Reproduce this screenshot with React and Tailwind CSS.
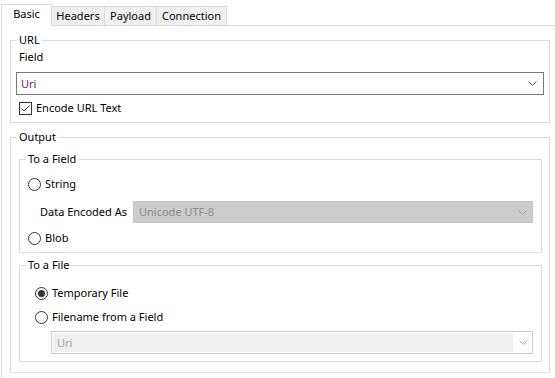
import React from "react";

const Chevron = ({ color }) => (
  <svg width="9" height="5" viewBox="0 0 9 5" className="block">
    <path d="M0.5 0.5 L4.5 4.5 L8.5 0.5" fill="none" stroke={color} strokeWidth="1" />
  </svg>
);

const Radio = ({ checked }) => (
  <span className="w-[13px] h-[13px] rounded-full border border-[#333333] bg-white flex items-center justify-center shrink-0">
    {checked && <span className="w-[7px] h-[7px] rounded-full bg-[#333333]" />}
  </span>
);

const Checkbox = () => (
  <span className="w-[13px] h-[13px] border border-[#333333] bg-white flex items-center justify-center shrink-0">
    <svg width="11" height="11" viewBox="0 0 11 11" className="block">
      <path d="M1.5 5.5 L4 8 L9.5 2.5" fill="none" stroke="#444444" strokeWidth="1" />
    </svg>
  </span>
);

export default function App() {
  return (
    <div className="w-[555px] h-[378px] overflow-hidden bg-white text-black text-[11px] leading-[16px] font-['Noto_Sans',sans-serif] whitespace-nowrap">
      {/* Tabs */}
      <div className="flex items-end h-[25px] pl-[1px] relative z-10">
        <div className="w-[51px] h-[22px] -mb-px bg-white border-t border-l border-r border-[#d9d9d9] flex items-center justify-center pb-[3px]">
          Basic
        </div>
        <div className="w-[53px] h-[19px] bg-[#f0f0f0] border-t border-r border-[#d9d9d9] flex items-center justify-center">
          Headers
        </div>
        <div className="w-[52px] h-[19px] bg-[#f0f0f0] border-t border-r border-[#d9d9d9] flex items-center justify-center">
          Payload
        </div>
        <div className="w-[70px] h-[19px] bg-[#f0f0f0] border-t border-r border-[#d9d9d9] flex items-center justify-center">
          Connection
        </div>
      </div>

      {/* Panel */}
      <div className="ml-[1px] w-[570px] h-[400px] border-l border-t border-[#d9d9d9] pt-[6px] pl-[8px]">
        {/* URL */}
        <fieldset className="w-[540px] border border-[#dcdcdc] pb-[6px]">
          <legend className="ml-[6px] px-[2px] leading-[16px]">URL</legend>
          <div className="ml-[8px] mt-[1px] h-[16px]">Field</div>
          <div className="ml-[5px] mt-[7px] w-[528px] h-[23px] border border-[#7a7a7a] bg-white flex items-center justify-between pl-[4px] pr-[6px]">
            <span className="text-[#6e1470]">Uri</span>
            <Chevron color="#555555" />
          </div>
          <div className="ml-[8px] mt-[5px] h-[16px] flex items-center gap-[4px]">
            <Checkbox />
            <span>Encode URL Text</span>
          </div>
        </fieldset>

        {/* Output */}
        <fieldset className="mt-[6px] w-[540px] border border-[#dcdcdc] pb-[10px]">
          <legend className="ml-[6px] px-[2px] leading-[16px]">Output</legend>

          <fieldset className="ml-[8px] mt-[6px] w-[523px] border border-[#dcdcdc] pb-[6px]">
            <legend className="ml-[6px] px-[2px] leading-[16px]">To a Field</legend>
            <div className="ml-[8px] mt-[9px] h-[16px] flex items-center gap-[4px]">
              <Radio />
              <span>String</span>
            </div>
            <div className="ml-[20px] mt-[9px] h-[22px] flex items-center">
              <span className="w-[93px] shrink-0">Data Encoded As</span>
              <div className="w-[400px] h-[22px] bg-[#cccccc] border border-[#c4c4c4] flex items-center justify-between pl-[5px] pr-[5px]">
                <span className="text-[#8c8c8c]">Unicode UTF-8</span>
                <Chevron color="#a8a8a8" />
              </div>
            </div>
            <div className="ml-[8px] mt-[7px] h-[16px] flex items-center gap-[4px]">
              <Radio />
              <span>Blob</span>
            </div>
          </fieldset>

          <fieldset className="ml-[8px] mt-[4px] w-[523px] border border-[#dcdcdc] pb-[7px]">
            <legend className="ml-[6px] px-[2px] leading-[16px]">To a File</legend>
            <div className="ml-[15px] mt-[12px] h-[16px] flex items-center gap-[4px]">
              <Radio checked />
              <span>Temporary File</span>
            </div>
            <div className="ml-[15px] mt-[8px] h-[16px] flex items-center gap-[4px]">
              <Radio />
              <span>Filename from a Field</span>
            </div>
            <div className="ml-[31px] mt-[6px] w-[482px] h-[23px] border border-[#cccccc] bg-white flex items-stretch">
              <div className="flex-1 bg-[#f0f0f0] m-[1px] flex items-center pl-[4px]">
                <span className="text-[#a3a3a3]">Uri</span>
              </div>
              <div className="w-[18px] flex items-center justify-center">
                <Chevron color="#b0b0b0" />
              </div>
            </div>
          </fieldset>
        </fieldset>
      </div>
    </div>
  );
}
